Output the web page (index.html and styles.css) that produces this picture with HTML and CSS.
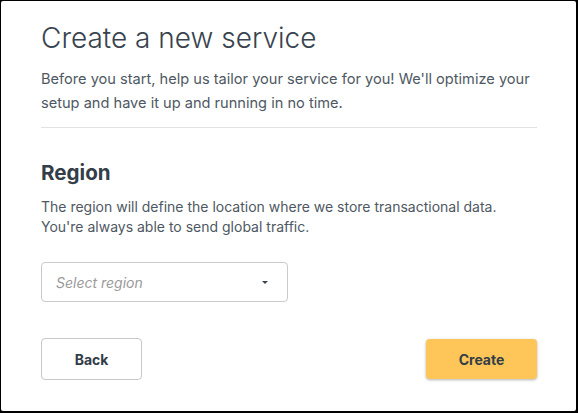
FILE: index.html
```html
<!DOCTYPE html>
<html lang="en">
<head>
<meta charset="utf-8">
<title>Create a new service</title>
<link rel="stylesheet" href="styles.css">
</head>
<body>
<div class="card">
  <h1 class="title">Create a new service</h1>
  <p class="intro">Before you start, help us tailor your service for you! We'll optimize your<br>setup and have it up and running in no time.</p>
  <hr class="divider">
  <h2 class="section-title">Region</h2>
  <p class="desc">The region will define the location where we store transactional data.<br>You're always able to send global traffic.</p>
  <div class="select">
    <span class="placeholder">Select region</span>
    <span class="caret"></span>
  </div>
  <div class="actions">
    <button class="btn btn-back">Back</button>
    <button class="btn btn-create">Create</button>
  </div>
</div>
</body>
</html>
```
FILE: styles.css
```css
html, body {
  margin: 0;
  padding: 0;
  background: #000;
}
body {
  font-family: Inter, Roboto, "Liberation Sans", Arial, sans-serif;
  width: 578px;
  height: 413px;
  overflow: hidden;
}
.card {
  box-sizing: border-box;
  width: 575px;
  height: 410px;
  margin: 1px 2px 2px 1px;
  background: #fff;
  border-radius: 2px;
  padding: 19px 39px 0 40px;
}
.title {
  margin: 0;
  font-size: 28px;
  font-weight: 300;
  line-height: 36px;
  color: #38434e;
}
.intro {
  margin: 11px 0 0;
  font-size: 14.6px;
  line-height: 24px;
  color: #4e5862;
  white-space: nowrap;
}
.divider {
  margin: 12px 0 0;
  border: 0;
  border-top: 1px solid #e2e2e2;
  height: 0;
}
.section-title {
  margin: 31px 0 0;
  font-size: 20.6px;
  font-weight: 700;
  line-height: 28px;
  color: #333e49;
}
.desc {
  margin: 10px 0 0;
  font-size: 14px;
  line-height: 20px;
  color: #4e5862;
  white-space: nowrap;
}
.select {
  box-sizing: border-box;
  margin-top: 25px;
  width: 247px;
  height: 40px;
  border: 1px solid #cacaca;
  border-radius: 4px;
  display: flex;
  align-items: center;
  justify-content: space-between;
  padding: 0 19px 0 14px;
}
.placeholder {
  font-size: 14px;
  font-style: italic;
  color: #9a9a9a;
}
.caret {
  width: 0;
  height: 0;
  border-left: 3px solid transparent;
  border-right: 3px solid transparent;
  border-top: 3px solid #3a4550;
  margin-top: 1px;
}
.actions {
  margin-top: 36px;
  display: flex;
  justify-content: space-between;
  align-items: flex-start;
}
.btn {
  box-sizing: border-box;
  font-family: Inter, Roboto, "Liberation Sans", Arial, sans-serif;
  font-size: 14px;
  font-weight: 700;
  color: #323d48;
  border-radius: 4px;
  cursor: pointer;
}
.btn-back {
  width: 101px;
  height: 42px;
  background: #fff;
  border: 1px solid #c8c8c8;
}
.btn-create {
  width: 111px;
  height: 40px;
  margin-top: 1px;
  background: #fec658;
  border: 0;
  box-shadow: 0 1px 3px rgba(0, 0, 0, 0.3);
}
```
